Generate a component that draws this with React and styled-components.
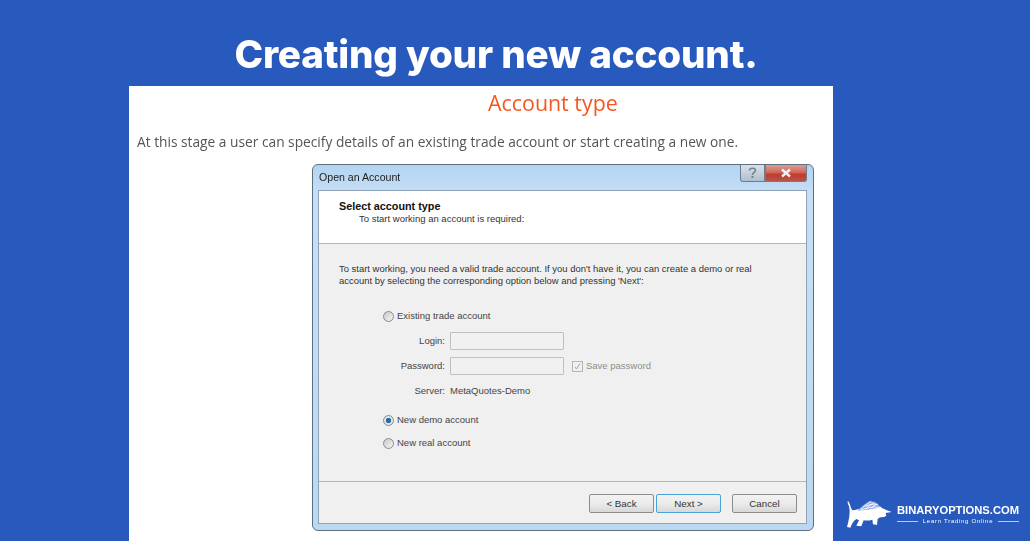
import React from "react";
import styled, { createGlobalStyle } from "styled-components";

const Global = createGlobalStyle`
  html, body { margin: 0; padding: 0; background: #2859bd; }
  #root { width: 1030px; height: 541px; overflow: hidden; }
`;

const Page = styled.div`
  position: relative;
  width: 1030px;
  height: 541px;
  background: #2859bd;
  overflow: hidden;
  display: flex;
  flex-direction: column;
`;

const Title = styled.h1`
  margin: 0;
  height: 86px;
  flex: none;
  box-sizing: border-box;
  padding: 31px 38px 0 0;
  width: 100%;
  text-align: center;
  font: 800 38.6px/46px Inter, "Open Sans", sans-serif;
  letter-spacing: -0.2px;
  color: #fff;
  filter: blur(0.3px);
`;

const Panel = styled.div`
  width: 704px;
  flex: 1;
  margin-left: 129px;
  box-sizing: border-box;
  background: #fff;
  padding: 0 0 0 8px;
  font-family: "Open Sans", sans-serif;
`;

const Heading = styled.h2`
  margin: 0;
  padding: 1px 0 0 351px;
  font: 400 21.4px/32px "Open Sans", sans-serif;
  color: #f4571f;
  filter: blur(0.3px);
`;

const Intro = styled.p`
  margin: 0;
  padding-top: 11px;
  font: 400 13.74px/24px "Open Sans", sans-serif;
  color: #555;
  filter: blur(0.3px);
`;

const Dialog = styled.div`
  margin: 10px 0 0 175px;
  width: 502px;
  height: 367px;
  box-sizing: border-box;
  padding: 0 6px 6px 5px;
  border: 1px solid #5d7080;
  border-radius: 6px;
  display: flex;
  flex-direction: column;
  background: linear-gradient(180deg, #b3d4f1 0%, #c6dff6 8%, #bcd8f1 100%);
  font-family: "Liberation Sans", sans-serif;
  filter: blur(0.4px);
`;

const TitleBar = styled.div`
  height: 25px;
  flex: none;
  display: flex;
  justify-content: space-between;
  font-size: 10.6px;
  color: #222;
  line-height: 25px;
`;

const TitleText = styled.span`
  padding-left: 1px;
`;

const WinButtons = styled.div`
  display: flex;
  height: 17px;
`;

const WinButton = styled.div`
  width: ${(p) => p.$w}px;
  display: flex;
  align-items: center;
  justify-content: center;
  box-sizing: border-box;
  border: 1px solid #6d7d8d;
  border-top: none;
  border-radius: ${(p) => p.$radius};
  background: ${(p) =>
    p.$close
      ? "linear-gradient(180deg,#dc9d93 0%,#cf6a5c 45%,#c23a2c 60%,#b8544a 100%)"
      : "linear-gradient(180deg,#d5e0ea 0%,#c5d1dc 50%,#aebfcf 100%)"};
`;

const Inner = styled.div`
  flex: 1;
  display: flex;
  flex-direction: column;
  border: 1px solid #8ea3b5;
  background: #f0f0f0;
`;

const Banner = styled.div`
  height: 53px;
  flex: none;
  box-sizing: border-box;
  background: #fff;
  border-bottom: 1px solid #b5b5b5;
  padding: 9px 0 0 20px;
`;

const BannerTitle = styled.div`
  font: 700 10.8px/12px "Liberation Sans", sans-serif;
  color: #111;
`;

const BannerSub = styled.div`
  font: 400 9.5px/13px "Liberation Sans", sans-serif;
  padding-left: 20px;
  color: #333;
`;

const Body = styled.div`
  flex: 1;
  display: flex;
  flex-direction: column;
  padding: 19px 0 0 20px;
`;

const Explain = styled.p`
  margin: 0 0 22px;
  font: 400 9.46px/12px "Liberation Sans", sans-serif;
  color: #333;
`;

const Options = styled.div`
  display: flex;
  flex-direction: column;
  padding-left: 44px;
`;

const RadioRow = styled.label`
  display: flex;
  align-items: center;
  gap: 3px;
  height: 14px;
  margin-top: ${(p) => p.$mt || 0}px;
  font: 400 9.5px/14px "Liberation Sans", sans-serif;
  color: #444;
`;

const Radio = styled.span`
  width: 11px;
  height: 11px;
  box-sizing: border-box;
  border-radius: 50%;
  border: 1px solid #8b8b8b;
  background: ${(p) =>
    p.$checked
      ? "radial-gradient(circle,#1f6fb0 0 2.4px,#e2e2e2 3px)"
      : "linear-gradient(135deg,#c9c9c9,#f5f5f5)"};
`;

const FormGrid = styled.div`
  display: grid;
  grid-template-columns: 62px 114px auto;
  column-gap: 5px;
  row-gap: 7px;
  align-items: center;
  margin-top: 9px;
  margin-bottom: 13px;
  font: 400 9.5px/18px "Liberation Sans", sans-serif;
  color: #444;
`;

const FieldLabel = styled.span`
  text-align: right;
`;

const Field = styled.div`
  height: 18px;
  box-sizing: border-box;
  border: 1px solid #c0c0c0;
  border-radius: 1px;
  background: #f1f1f1;
`;

const SaveBox = styled.div`
  display: flex;
  align-items: center;
  gap: 3px;
  padding-left: 3px;
  color: #8d8d8d;
`;

const Check = styled.span`
  width: 11px;
  height: 11px;
  box-sizing: border-box;
  border: 1px solid #b5b5b5;
  background: #f0f0f0;
  display: flex;
`;

const Footer = styled.div`
  height: 42px;
  flex: none;
  box-sizing: border-box;
  border-top: 1px solid #b5b5b5;
  display: flex;
  justify-content: flex-end;
  align-items: flex-start;
  padding: 12px 9px 0 0;
`;

const Btn = styled.button`
  width: 65px;
  height: 19px;
  margin-left: ${(p) => p.$gap || 0}px;
  padding: 0;
  box-sizing: border-box;
  border: 1px solid ${(p) => (p.$primary ? "#4aa3d6" : "#8c8c8c")};
  border-radius: 2px;
  background: linear-gradient(180deg, #f2f2f2 0%, #ebebeb 50%, #d8d8d8 100%);
  font: 400 9.8px/1 "Liberation Sans", sans-serif;
  color: #333;
`;

const Logo = styled.div`
  position: absolute;
  left: 847px;
  top: 500px;
  display: flex;
  align-items: center;
  gap: 5px;
  filter: blur(0.25px);
`;

const LogoText = styled.div`
  display: flex;
  flex-direction: column;
  align-items: center;
  width: 122px;
  color: #fff;
`;

const LogoName = styled.div`
  font: 700 11.2px/14px "Liberation Sans", sans-serif;
  white-space: nowrap;
`;

const LogoTag = styled.div`
  display: flex;
  align-items: center;
  gap: 5px;
  width: 100%;
  font: 400 6px/9px "Liberation Sans", sans-serif;
  letter-spacing: 0.72px;
  white-space: nowrap;
  &::before, &::after {
    content: "";
    flex: 1;
    height: 1px;
    background: #b9cbee;
  }
`;

const Bull = () => (
  <svg width="45" height="28" viewBox="12 11 135 84">
    <path
      fill="#fff"
      d="M15 13 C12 20 16 25 18 30 L20 42 C20 55 18 72 12 92 L22 94 C28 80 33 72 40 68 L48 72 L40 88 L55 90 L62 72 C72 74 82 72 88 70 L90 84 L102 86 L104 68 C110 62 118 62 124 62 L130 58 L128 50 L146 47 L138 44 C132 44 126 38 118 36 C110 28 100 24 90 20 C70 28 45 42 28 42 C24 36 22 28 20 22 Z"
    />
    <path
      fill="#8fabe4"
      d="M46 40 C58 30 70 18 80 14 C92 14 104 20 114 34 C96 36 70 40 46 44 Z"
    />
    <path
      fill="none"
      stroke="#fff"
      strokeWidth="2.5"
      d="M54 38 C66 28 76 20 84 16 M68 38 C76 30 86 22 94 18 M82 36 C90 30 96 26 103 24 M50 42 C72 34 92 30 114 34 M66 30 C82 24 94 22 104 24"
    />
  </svg>
);

const CloseGlyph = () => (
  <svg width="12" height="10" viewBox="0 0 12 10">
    <path d="M2 1.5 L10 8.5 M10 1.5 L2 8.5" stroke="#f2f2f2" strokeWidth="2.4" fill="none" />
  </svg>
);

const HelpGlyph = () => (
  <svg width="9" height="12" viewBox="0 0 9 12">
    <path d="M1.5 3.5 C1.5 0.5 7.5 0.5 7.5 3.5 C7.5 5.5 4.5 5.5 4.5 8" stroke="#76838f" strokeWidth="1.6" fill="none" />
    <rect x="3.5" y="9" width="2" height="2" fill="#76838f" />
  </svg>
);

export default function App() {
  return (
    <Page>
      <Global />
      <Title>Creating your new account.</Title>
      <Panel>
        <Heading>Account type</Heading>
        <Intro>At this stage a user can specify details of an existing trade account or start creating a new one.</Intro>
        <Dialog>
          <TitleBar>
            <TitleText>Open an Account</TitleText>
            <WinButtons>
              <WinButton $w={25} $radius="0 0 0 3px"><HelpGlyph /></WinButton>
              <WinButton $w={42} $close $radius="0 0 3px 0"><CloseGlyph /></WinButton>
            </WinButtons>
          </TitleBar>
          <Inner>
            <Banner>
              <BannerTitle>Select account type</BannerTitle>
              <BannerSub>To start working an account is required:</BannerSub>
            </Banner>
            <Body>
              <Explain>
                To start working, you need a valid trade account. If you don't have it, you can create a demo or real
                <br />
                account by selecting the corresponding option below and pressing 'Next':
              </Explain>
              <Options>
                <RadioRow><Radio />Existing trade account</RadioRow>
                <FormGrid>
                  <FieldLabel>Login:</FieldLabel>
                  <Field />
                  <span />
                  <FieldLabel>Password:</FieldLabel>
                  <Field />
                  <SaveBox>
                    <Check>
                      <svg width="9" height="9" viewBox="0 0 9 9">
                        <path d="M2 5 L3.5 7 L7 1.5" fill="none" stroke="#a5a5a5" strokeWidth="1" />
                      </svg>
                    </Check>
                    Save password
                  </SaveBox>
                  <FieldLabel>Server:</FieldLabel>
                  <span>MetaQuotes-Demo</span>
                  <span />
                </FormGrid>
                <RadioRow><Radio $checked />New demo account</RadioRow>
                <RadioRow $mt={9}><Radio />New real account</RadioRow>
              </Options>
            </Body>
            <Footer>
              <Btn>&lt; Back</Btn>
              <Btn $primary $gap={2}>Next &gt;</Btn>
              <Btn $gap={11}>Cancel</Btn>
            </Footer>
          </Inner>
        </Dialog>
      </Panel>
      <Logo>
        <Bull />
        <LogoText>
          <LogoName>BINARYOPTIONS.COM</LogoName>
          <LogoTag>Learn Trading Online</LogoTag>
        </LogoText>
      </Logo>
    </Page>
  );
}
